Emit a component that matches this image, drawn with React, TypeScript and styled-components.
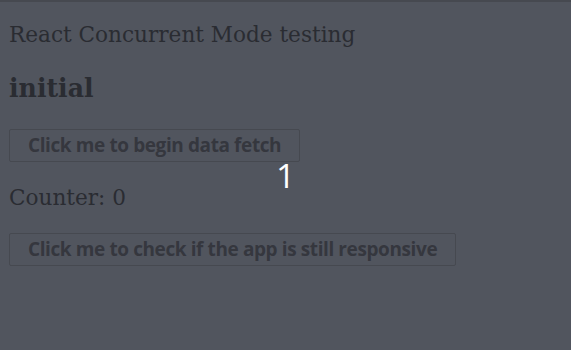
import React from "react";
import styled, { createGlobalStyle } from "styled-components";

const Global = createGlobalStyle`
  html, body { margin: 0; padding: 0; background: #51555e; }
  body { width: 571px; height: 350px; overflow: hidden; }
`;

const Page = styled.div`
  box-sizing: border-box;
  width: 571px;
  height: 350px;
  border-top: 2px solid #464950;
  padding: 20px 9px 0;
  font-family: "DejaVu Serif", serif;
  color: #2a2c32;
  position: relative;
`;

const Title = styled.div`
  font-size: 21.6px;
  line-height: 26px;
`;

const Status = styled.h2`
  font-size: 25.2px;
  font-weight: bold;
  margin: 25px 0 26px;
  line-height: 30px;
`;

const Button = styled.button`
  display: block;
  font-family: "Open Sans", sans-serif;
  font-weight: 700;
  font-size: 19px;
  letter-spacing: -0.4px;
  color: #35373e;
  background: transparent;
  border: 1px solid #464950;
  border-radius: 2px;
  padding: 0 18px;
  height: 33px;
  line-height: 31px;
  box-sizing: border-box;
  margin: 0;
`;

const Counter = styled.p`
  font-size: 21.6px;
  margin: 23px 0 22px;
  line-height: 26px;
`;

const Badge = styled.span`
  position: absolute;
  left: 276px;
  top: 157px;
  font-family: "Open Sans", sans-serif;
  font-size: 33.6px;
  line-height: 1;
  color: #ffffff;
`;

export default function App() {
  return (
    <>
      <Global />
      <Page>
        <Title>React Concurrent Mode testing</Title>
        <Status>initial</Status>
        <Button>Click me to begin data fetch</Button>
        <Counter>Counter: 0</Counter>
        <Button>Click me to check if the app is still responsive</Button>
        <Badge>1</Badge>
      </Page>
    </>
  );
}
